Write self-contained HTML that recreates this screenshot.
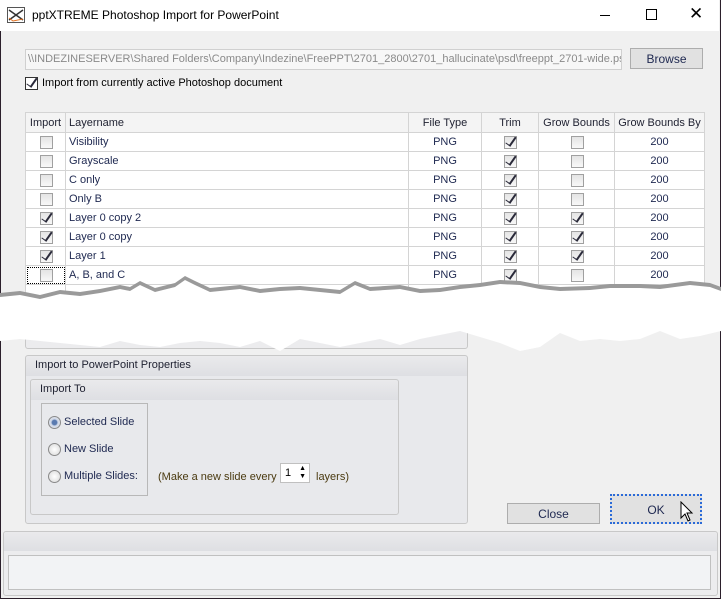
<!DOCTYPE html>
<html><head><style>
*{box-sizing:border-box;margin:0;padding:0}
body{width:721px;height:599px;overflow:hidden;background:#2b1f2b;font-family:"Liberation Sans",sans-serif;font-size:11px;color:#1e2850;position:relative}
.a{position:absolute}
.win{left:1px;top:0;width:719px;height:598px;background:#f0f0f0}
.title{left:0;top:0;width:719px;height:31px;background:#fff}
.cb{position:absolute;width:13px;height:13px;border:1px solid #a0a0a0;background:linear-gradient(#e4e4e4,#f8f8f8)}
.cb.k::after{content:"";position:absolute;left:3px;top:-2px;width:4px;height:10px;border-right:2px solid #2a2a3a;border-bottom:1.5px solid #2a2a3a;transform:rotate(35deg)}
table{border-collapse:collapse;position:absolute;left:25px;top:112px;width:679px;background:#fff;table-layout:fixed}
td,th{border:1px solid #d4d4d4;height:19px;font-weight:normal;font-size:11px;padding:0 3px;color:#1e2850;position:relative;white-space:nowrap;overflow:hidden}
th{background:#f4f4f4;color:#1e2030;height:20px}
.c{text-align:center}
td .cb{left:50%;top:3px;margin-left:-6px}
.grp{position:absolute;border:1px solid #c8c8c8;border-radius:3px;background:#e8e9ec}
.gh{position:absolute;left:0;top:0;right:0;height:20px;background:linear-gradient(#eaeaec,#dedfe3);border-radius:3px 3px 0 0;padding:3px 0 0 9px;color:#1e2030}
.btn{position:absolute;border:1px solid #adadad;background:#e1e1e1;text-align:center;font-size:12px;color:#1e2850}
.rad{position:absolute;width:13px;height:13px;border-radius:50%;border:1px solid #8a8a8a;background:radial-gradient(#fff,#d8d8d8)}
</style></head><body>
<div class="a win"></div>
<div class="a title"></div>
<svg class="a" style="left:7px;top:7px" width="18" height="16"><rect x="0.5" y="0.5" width="17" height="15" fill="#fff" stroke="#555"/><path d="M2 3 L16 13 M2 13 L16 3" stroke="#333" stroke-width="1.5"/><path d="M2 11 l4 3 l10-2" stroke="#e07020" fill="none"/></svg>
<div class="a" style="left:32px;top:8px;font-size:12px;color:#000">pptXTREME Photoshop Import for PowerPoint</div>
<div class="a" style="left:600px;top:15px;width:10px;border-top:1px solid #000"></div>
<div class="a" style="left:646px;top:9px;width:11px;height:11px;border:1px solid #000"></div>
<div class="a" style="left:689px;top:4px;font-size:17px;color:#000">✕</div>

<div class="a" style="left:25px;top:49px;width:597px;height:21px;border:1px solid #d0d0d0;background:#f7f7f7;color:#8a8a8a;padding:3px 0 0 2px;white-space:nowrap;overflow:hidden">\\INDEZINESERVER\Shared Folders\Company\Indezine\FreePPT\2701_2800\2701_hallucinate\psd\freeppt_2701-wide.ps</div>
<div class="btn" style="left:630px;top:48px;width:73px;height:21px;padding-top:3px">Browse</div>
<div class="cb k" style="left:25px;top:77px;background:#fff;border-color:#333"></div>
<div class="a" style="left:42px;top:77px;color:#000;font-size:11px">Import from currently active Photoshop document</div>

<table>
<colgroup><col style="width:40px"><col style="width:343px"><col style="width:73px"><col style="width:57px"><col style="width:76px"><col style="width:90px"></colgroup>
<tr><th>Import</th><th style="text-align:left">Layername</th><th>File Type</th><th>Trim</th><th>Grow Bounds</th><th>Grow Bounds By</th></tr>
<tr><td><i class="cb"></i></td><td>Visibility</td><td class="c">PNG</td><td><i class="cb k"></i></td><td><i class="cb"></i></td><td class="c">200</td></tr>
<tr><td><i class="cb"></i></td><td>Grayscale</td><td class="c">PNG</td><td><i class="cb k"></i></td><td><i class="cb"></i></td><td class="c">200</td></tr>
<tr><td><i class="cb"></i></td><td>C only</td><td class="c">PNG</td><td><i class="cb k"></i></td><td><i class="cb"></i></td><td class="c">200</td></tr>
<tr><td><i class="cb"></i></td><td>Only B</td><td class="c">PNG</td><td><i class="cb k"></i></td><td><i class="cb"></i></td><td class="c">200</td></tr>
<tr><td><i class="cb k"></i></td><td>Layer 0 copy 2</td><td class="c">PNG</td><td><i class="cb k"></i></td><td><i class="cb k"></i></td><td class="c">200</td></tr>
<tr><td><i class="cb k"></i></td><td>Layer 0 copy</td><td class="c">PNG</td><td><i class="cb k"></i></td><td><i class="cb k"></i></td><td class="c">200</td></tr>
<tr><td><i class="cb k"></i></td><td>Layer 1</td><td class="c">PNG</td><td><i class="cb k"></i></td><td><i class="cb k"></i></td><td class="c">200</td></tr>
<tr><td style="outline:1px dotted #000;outline-offset:-2px"><i class="cb"></i></td><td>A, B, and C</td><td class="c">PNG</td><td><i class="cb k"></i></td><td><i class="cb"></i></td><td class="c">200</td></tr>
<tr><td></td><td></td><td></td><td></td><td></td><td></td></tr>
</table>
<div class="grp" style="left:25px;top:300px;width:443px;height:49px;background:#ececee"></div>

<svg class="a" style="left:0;top:275px" width="721" height="80">
<path d="M0 20 L20 18 L40 22 L60 17 L80 19 L100 16 L120 12 L130 14 L140 8 L155 15 L175 10 L185 3 L195 8 L210 15 L240 12 L260 16 L280 14 L300 13 L320 15 L340 17 L355 8 L370 14 L400 12 L420 16 L440 15 L460 12 L480 10 L500 7 L520 8 L540 12 L560 14 L590 13 L610 11 L640 11 L660 12 L690 8 L710 10 L721 14 L721 30 L0 30Z" fill="#9a9a9a" transform="translate(0,-2)"/>
<path d="M0 20 L20 18 L40 22 L60 17 L80 19 L100 16 L120 12 L130 14 L140 8 L155 15 L175 10 L185 3 L195 8 L210 15 L240 12 L260 16 L280 14 L300 13 L320 15 L340 17 L355 8 L370 14 L400 12 L420 16 L440 15 L460 12 L480 10 L500 7 L520 8 L540 12 L560 14 L590 13 L610 11 L640 11 L660 12 L690 8 L710 10 L721 14 L721 54 L700 59 L680 62 L660 54 L640 62 L620 64 L600 62 L580 64 L560 56 L540 70 L520 74 L500 66 L480 60 L460 54 L440 58 L420 62 L400 68 L380 62 L360 66 L340 70 L320 66 L300 62 L280 74 L260 64 L240 70 L220 66 L200 64 L180 66 L160 70 L140 68 L120 64 L100 70 L80 68 L60 66 L40 64 L20 62 L0 64Z" fill="#fff" transform="translate(0,2)"/>
</svg>

<div class="grp" style="left:25px;top:355px;width:443px;height:169px">
<div class="gh">Import to PowerPoint Properties</div>
<div class="grp" style="left:4px;top:23px;width:369px;height:136px">
<div class="gh">Import To</div>
<div class="a" style="left:10px;top:23px;width:107px;height:93px;border:1px solid #b8b8b8"></div>
<div class="rad" style="left:17px;top:36px;background:radial-gradient(#5a7ab0 30%,#d0d8e8 45%,#e8e8e8)"></div>
<div class="a" style="left:33px;top:36px">Selected Slide</div>
<div class="rad" style="left:17px;top:63px"></div>
<div class="a" style="left:33px;top:63px">New Slide</div>
<div class="rad" style="left:17px;top:90px"></div>
<div class="a" style="left:33px;top:90px">Multiple Slides:</div>
<div class="a" style="left:127px;top:91px;color:#4a3a10">(Make a new slide every</div>
<div class="a" style="left:249px;top:83px;width:30px;height:20px;background:#fff;border:1px solid #c0c0c0;padding:3px 0 0 4px;color:#000">1<span style="position:absolute;right:3px;top:1px;font-size:7px;line-height:8px">▲<br>▼</span></div>
<div class="a" style="left:285px;top:91px;color:#4a3a10">layers)</div>
</div>
</div>

<div class="btn" style="left:507px;top:503px;width:93px;height:21px;padding-top:3px">Close</div>
<div class="btn" style="left:610px;top:494px;width:92px;height:30px;padding-top:7px;border:2px dotted #2a6ad8">OK</div>
<svg class="a" style="left:680px;top:501px" width="14" height="22"><path d="M1 1 L1 17 L5 13 L8 20 L10 19 L7 12 L12 12Z" fill="#fff" stroke="#000"/></svg>

<div class="grp" style="left:3px;top:531px;width:715px;height:65px;background:#ececee">
<div class="gh" style="height:19px"></div>
<div class="a" style="left:4px;top:23px;width:703px;height:35px;border:1px solid #c0c0c0;background:#f2f3f5"></div>
</div>
</body></html>
